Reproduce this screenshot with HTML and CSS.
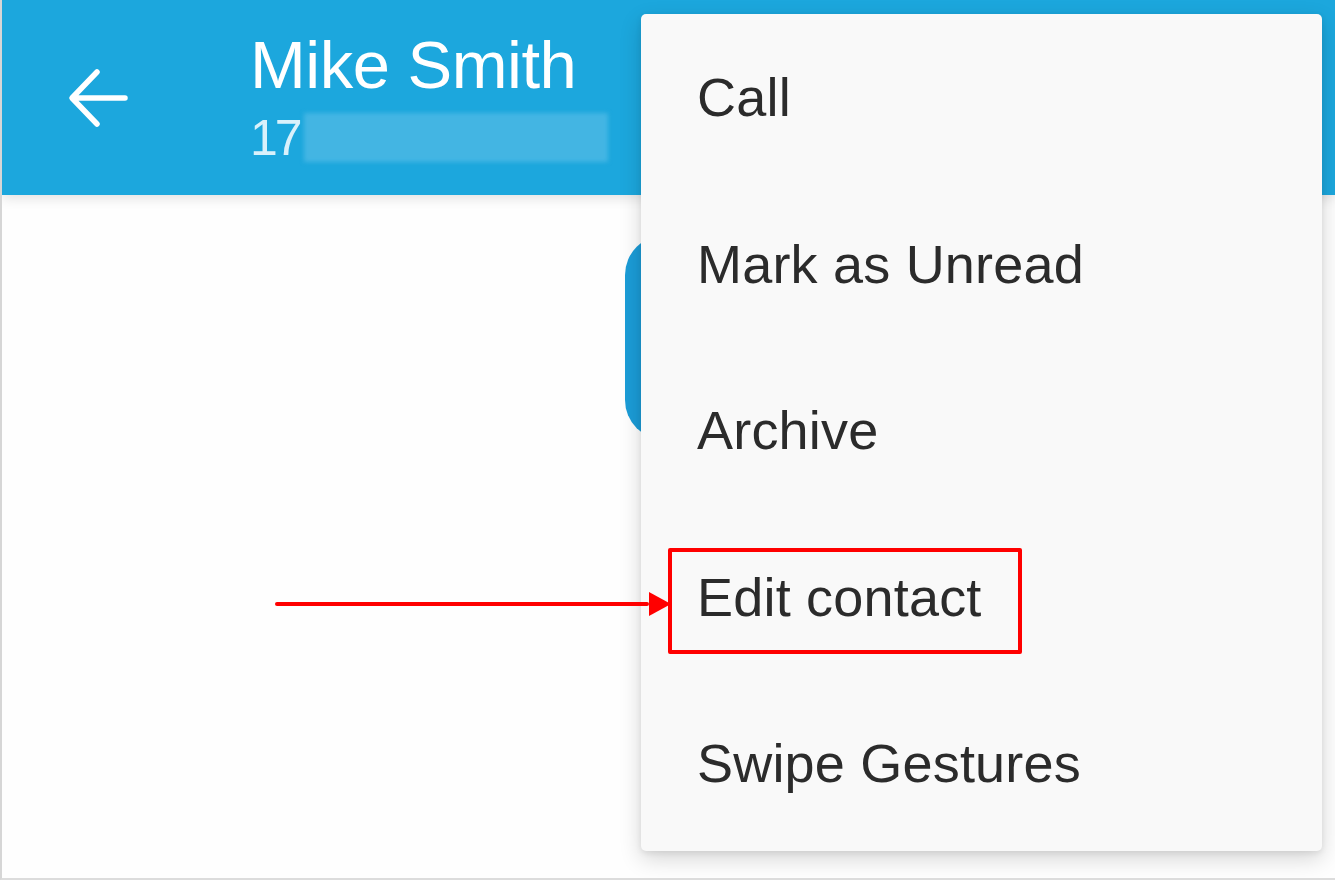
FILE: index.html
```html
<!DOCTYPE html>
<html lang="en">
<head>
    <meta charset="UTF-8">
    <meta name="viewport" content="width=device-width, initial-scale=1.0">
    <title>Mike Smith</title>
    <link rel="stylesheet" href="styles.css">
</head>
<body>
    <div class="screen">
        <header class="topbar">
            <button class="back-btn" aria-label="Back">
                <svg width="60" height="60" viewBox="0 0 60 60">
                    <path d="M57 30H6M29 4L4 30l25 26" fill="none" stroke="#fff" stroke-width="5.5" stroke-linecap="round" stroke-linejoin="round"/>
                </svg>
            </button>
            <div class="contact">
                <div class="contact-name">Mike Smith</div>
                <div class="contact-number">17<span class="blurred"></span></div>
            </div>
        </header>
        <div class="thread">
            <div class="bubble"></div>
        </div>

        <ul class="menu">
            <li>Call</li>
            <li>Mark as Unread</li>
            <li>Archive</li>
            <li>Edit contact</li>
            <li>Swipe Gestures</li>
        </ul>

        <!-- annotation -->
        <div class="highlight-box"></div>
        <div class="pointer">
            <span class="pointer-line"></span>
            <span class="pointer-head"></span>
        </div>
    </div>
</body>
</html>
```

FILE: styles.css
```css
body {
    margin: 0;
    padding: 0;
    font-family: "Liberation Sans", Arial, sans-serif;
    background: #fff;
}
.screen {
    position: relative;
    width: 1335px;
    height: 880px;
    overflow: hidden;
    box-sizing: border-box;
    border-left: 2px solid #d6d6d6;
    border-bottom: 2px solid #dcdcdc;
    background: #fefefe;
}
.topbar {
    height: 195px;
    background: #1ca7dd;
    display: flex;
    align-items: center;
    box-shadow: 0 3px 12px rgba(0, 0, 0, 0.12);
    position: relative;
}
.back-btn {
    background: none;
    border: none;
    padding: 0;
    margin-left: 66px;
    margin-top: 0;
    width: 60px;
    height: 60px;
}
.contact {
    margin-left: 122px;
    margin-top: 0;
}
.contact-name {
    color: #fff;
    font-size: 67px;
    line-height: 70px;
    letter-spacing: -0.5px;
}
.contact-number {
    color: #d9f1fb;
    font-size: 50px;
    line-height: 56px;
    margin-top: 10px;
    display: flex;
    align-items: center;
    letter-spacing: -3px;
}
.blurred {
    display: inline-block;
    width: 304px;
    height: 49px;
    margin-left: 4px;
    background: #43b5e3;
    filter: blur(2px);
}
.thread {
    padding-top: 40px;
}
.bubble {
    margin-left: 623px;
    width: 60px;
    height: 205px;
    border-radius: 40px 0 0 40px;
    background: #1b9cd7;
}
.menu {
    position: absolute;
    top: 14px;
    left: 639px;
    width: 681px;
    margin: 0;
    padding: 2px 0;
    list-style: none;
    background: #f9f9f9;
    border-radius: 5px;
    box-shadow: 0 8px 22px rgba(0, 0, 0, 0.16), 0 2px 6px rgba(0, 0, 0, 0.08);
}
.menu li {
    height: 166.5px;
    display: flex;
    align-items: center;
    padding-left: 56px;
    padding-bottom: 4px;
    box-sizing: border-box;
    font-size: 54px;
    color: #2b2b2b;
    letter-spacing: 0.2px;
}
.highlight-box {
    position: absolute;
    left: 666px;
    top: 548px;
    width: 346px;
    height: 98px;
    border: 4px solid #ff0000;
    border-radius: 2px;
}
.pointer {
    position: absolute;
    left: 273px;
    top: 592px;
    display: flex;
    align-items: center;
}
.pointer-line {
    display: block;
    width: 374px;
    height: 4px;
    border-radius: 2px;
    background: #ff0000;
}
.pointer-head {
    display: block;
    width: 0;
    height: 0;
    border-top: 12px solid transparent;
    border-bottom: 12px solid transparent;
    border-left: 22px solid #ff0000;
}
```
